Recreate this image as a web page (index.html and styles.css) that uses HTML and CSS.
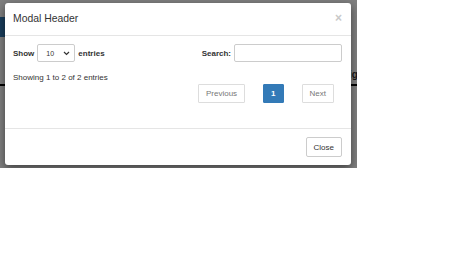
FILE: index.html
```html
<!DOCTYPE html>
<html lang="en">
<head>
  <meta charset="UTF-8" />
  <title>Modal</title>
  <link rel="stylesheet" href="styles.css">
</head>
<body>
  <div class="stage">
    <div class="page">
      <div class="navbar"></div>
      <div class="th-left">r</div>
      <div class="th-right">ig</div>
    </div>
    <div class="backdrop"></div>

    <div class="modal">
      <div class="modal-header">
        <h4>Modal Header</h4>
        <span class="close">&times;</span>
      </div>
      <div class="modal-body">
        <div class="top-row">
          <label class="length">Show
            <span class="select">10
              <svg width="7" height="5" viewBox="0 0 7 5"><path d="M1 1l2.5 2.5L6 1" fill="none" stroke="#333" stroke-width="1.2"/></svg>
            </span>
            entries</label>
          <label class="filter">Search: <span class="input"></span></label>
        </div>
        <div class="info-row">
          <div class="info">Showing 1 to 2 of 2 entries</div>
          <div class="pagination">
            <span class="page-btn disabled">Previous</span>
            <span class="page-btn active">1</span>
            <span class="page-btn disabled">Next</span>
          </div>
        </div>
      </div>
      <div class="modal-footer">
        <span class="btn">Close</span>
      </div>
    </div>
  </div>
</body>
</html>
```

FILE: styles.css
```css
* {
  margin: 0;
  padding: 0;
  box-sizing: border-box;
}

body {
  font-family: "Liberation Sans", Arial, sans-serif;
  font-size: 8px;
  color: #333;
  background: #fff;
}

.stage {
  position: relative;
  width: 357px;
  height: 168px;
  overflow: hidden;
  background: #fff;
}

.page {
  position: absolute;
  inset: 0;
}

.navbar {
  position: absolute;
  left: 0;
  top: 17px;
  width: 12px;
  height: 20px;
  background: #337ab7;
}

.th-left,
.th-right {
  position: absolute;
  top: 69px;
  height: 17px;
  font-weight: bold;
  font-size: 10px;
  border-bottom: 2px solid #000;
}

.th-left {
  left: 0;
  width: 10px;
  text-indent: -4px;
}

.th-right {
  left: 349px;
  width: 12px;
}

.backdrop {
  position: absolute;
  inset: 0;
  background: rgba(0, 0, 0, 0.5);
}

.modal {
  position: absolute;
  left: 5px;
  top: 3px;
  width: 346px;
  height: 162px;
  background: #fff;
  border-radius: 3px;
  box-shadow: 0 3px 9px rgba(0, 0, 0, 0.5);
  display: flex;
  flex-direction: column;
}

.modal-header {
  height: 33px;
  padding: 0 9px 0 8px;
  border-bottom: 1px solid #e5e5e5;
  display: flex;
  align-items: center;
  justify-content: space-between;
}

.modal-header h4 {
  font-size: 10.4px;
  font-weight: normal;
  padding-bottom: 2px;
}

.close {
  font-size: 12px;
  font-weight: bold;
  color: #c9c9c9;
  line-height: 1;
  margin-top: -3px;
}

.modal-body {
  flex: 1;
  padding: 8px 9px 0 8px;
  border-bottom: 1px solid #e5e5e5;
}

.top-row {
  display: flex;
  justify-content: space-between;
  align-items: center;
  height: 18px;
}

.top-row label {
  font-weight: bold;
  display: flex;
  align-items: center;
}

.select {
  width: 38px;
  height: 18px;
  margin: 0 3px 0 3px;
  border: 1px solid #ccc;
  border-radius: 2px;
  font-weight: normal;
  font-size: 7px;
  display: flex;
  align-items: center;
  justify-content: space-between;
  padding: 0 4px 0 8px;
}

.input {
  width: 108px;
  height: 18px;
  margin-left: 3px;
  border: 1px solid #ccc;
  border-radius: 2px;
}

.info-row {
  display: flex;
  justify-content: space-between;
}

.info {
  margin-top: 11px;
}

.pagination {
  margin-top: 22px;
  display: flex;
  gap: 18px;
  margin-right: 8px;
}

.page-btn {
  height: 19px;
  padding: 0 7px;
  border: 1px solid #ddd;
  border-radius: 1px;
  color: #777;
  display: flex;
  align-items: center;
}

.page-btn.active {
  background: #337ab7;
  border-color: #337ab7;
  color: #fff;
  font-weight: bold;
  padding: 0 7px;
}

.modal-footer {
  height: 36px;
  padding: 0 9px;
  display: flex;
  align-items: center;
  justify-content: flex-end;
}

.btn {
  height: 20px;
  padding: 0 7px;
  border: 1px solid #ccc;
  border-radius: 2px;
  display: flex;
  align-items: center;
  color: #333;
}
```
